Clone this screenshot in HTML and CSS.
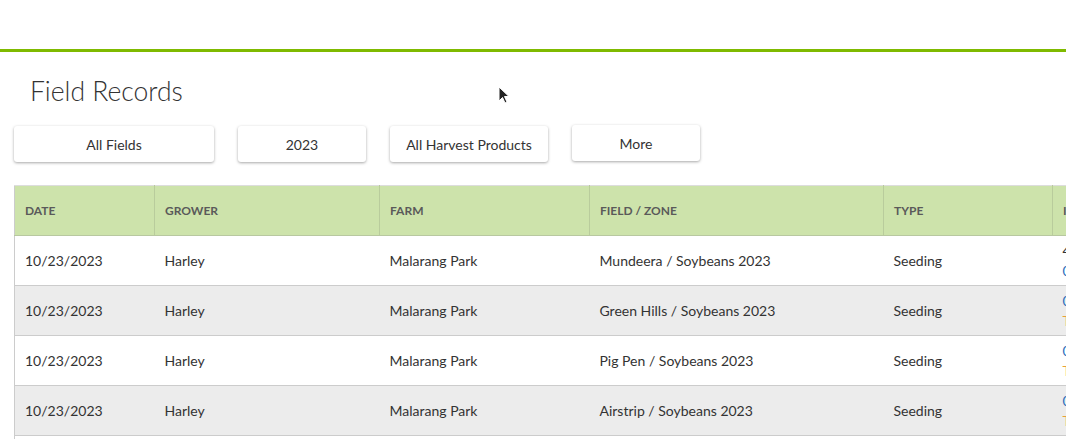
FILE: index.html
```html
<!DOCTYPE html>
<html>
<head>
<meta charset="utf-8">
<link rel="stylesheet" href="styles.css">
</head>
<body>
<header class="topbar"></header>
<main class="page">
  <h1 class="title">Field Records</h1>
  <div class="filters">
    <button class="filter w200">All Fields</button>
    <button class="filter w128">2023</button>
    <button class="filter w158">All Harvest Products</button>
    <button class="filter w128 up">More</button>
  </div>
  <div class="table-wrap">
    <table class="records">
      <colgroup>
        <col class="c1"><col class="c2"><col class="c3"><col class="c4"><col class="c5"><col class="c6">
      </colgroup>
      <thead>
        <tr><th>Date</th><th>Grower</th><th>Farm</th><th>Field / Zone</th><th>Type</th><th>Inputs</th></tr>
      </thead>
      <tbody>
        <tr><td>10/23/2023</td><td>Harley</td><td>Malarang Park</td><td>Mundeera / Soybeans 2023</td><td>Seeding</td><td class="multi"><span class="dark">45.2 ac</span><span class="blue">0.5 bu/ac</span></td></tr>
        <tr><td>10/23/2023</td><td>Harley</td><td>Malarang Park</td><td>Green Hills / Soybeans 2023</td><td>Seeding</td><td class="multi"><span class="blue">0.5 bu/ac</span><span class="orange">Total</span></td></tr>
        <tr><td>10/23/2023</td><td>Harley</td><td>Malarang Park</td><td>Pig Pen / Soybeans 2023</td><td>Seeding</td><td class="multi"><span class="blue">0.5 bu/ac</span><span class="orange">Total</span></td></tr>
        <tr><td>10/23/2023</td><td>Harley</td><td>Malarang Park</td><td>Airstrip / Soybeans 2023</td><td>Seeding</td><td class="multi"><span class="blue">0.5 bu/ac</span><span class="orange">Total</span></td></tr>
        <tr class="last"><td></td><td></td><td></td><td></td><td></td><td></td></tr>
      </tbody>
    </table>
  </div>
</main>
<svg class="cursor" width="14" height="20" viewBox="0 0 14 20"><path d="M1 1 L1 15 L4.5 11.5 L7 17 L9 16 L6.5 10.5 L11 10.5 Z" fill="#222" stroke="#fff" stroke-width="1"/></svg>
</body>
</html>
```
FILE: styles.css
```css
html, body {
  margin: 0;
  padding: 0;
  width: 1066px;
  height: 439px;
  overflow: hidden;
  background: #fff;
  font-family: "Lato", "Open Sans", sans-serif;
  color: #333;
  position: relative;
}
.topbar {
  height: 49px;
  border-bottom: 3px solid #7fba00;
  background: #fff;
}
.page {
  padding: 0 0 0 14px;
}
.title {
  margin: 23px 0 0 16px;
  font-size: 26.5px;
  font-weight: 300;
  line-height: 32px;
  color: #333;
}
.filters {
  display: flex;
  gap: 24px;
  margin-top: 19px;
  align-items: flex-start;
}
.filter {
  height: 36px;
  border: none;
  border-radius: 3px;
  background: #fff;
  box-shadow: 0 1px 3px rgba(0,0,0,0.35);
  font-family: inherit;
  font-size: 14px;
  color: #333;
  padding: 0;
}
.w200 { width: 200px; }
.w128 { width: 128px; }
.w158 { width: 158px; }
.up { margin-top: -1px; }
.table-wrap {
  margin-top: 23px;
  width: 1052px;
  overflow: hidden;
}
.records {
  border-collapse: collapse;
  table-layout: fixed;
  width: 1200px;
  border-left: 1px solid #ccc;
  border-top: 1px solid #ddd;
}
.c1 { width: 140px; }
.c2 { width: 225px; }
.c3 { width: 210px; }
.c4 { width: 294px; }
.c5 { width: 169px; }
.c6 { width: 162px; }
.records th {
  height: 49px;
  background: #cde3ab;
  text-align: left;
  font-size: 12px;
  font-weight: 700;
  text-transform: uppercase;
  color: #5a5a5a;
  padding: 0 0 0 10px;
  border-left: 1px solid #b9cc9c;
  border-bottom: 1px solid #b8c8a0;
  white-space: nowrap;
  overflow: hidden;
}
.records th:first-child { border-left: none; }
.records td {
  height: 49px;
  padding: 0 0 0 10px;
  font-size: 14px;
  color: #333;
  border-bottom: 1px solid #ccc;
  white-space: nowrap;
  overflow: hidden;
}
.records tbody tr:nth-child(even) td { background: #ececec; }
.records td.multi span { display: block; line-height: 20px; }
.dark { color: #333; }
.blue { color: #2a6ebb; }
.orange { color: #e8a23a; }
.cursor {
  position: absolute;
  left: 498px;
  top: 86px;
}
```
